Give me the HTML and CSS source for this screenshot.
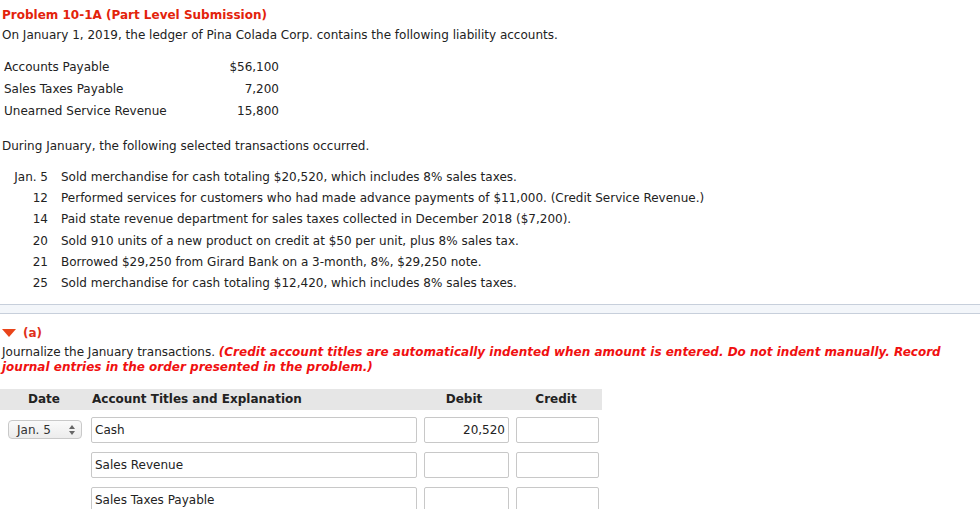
FILE: index.html
```html
<!DOCTYPE html>
<html>
<head>
<meta charset="utf-8">
<link rel="stylesheet" href="styles.css">
</head>
<body>
<div class="problem">
  <h1 class="title">Problem 10-1A (Part Level Submission)</h1>
  <p class="intro">On January 1, 2019, the ledger of Pina Colada Corp. contains the following liability accounts.</p>
  <div class="balances">
    <div class="bal-row"><span class="bal-name">Accounts Payable</span><span class="bal-amt">$56,100</span></div>
    <div class="bal-row"><span class="bal-name">Sales Taxes Payable</span><span class="bal-amt">7,200</span></div>
    <div class="bal-row"><span class="bal-name">Unearned Service Revenue</span><span class="bal-amt">15,800</span></div>
  </div>
  <p class="during">During January, the following selected transactions occurred.</p>
  <div class="trans">
    <span class="t-date">Jan. 5</span><span class="t-text">Sold merchandise for cash totaling $20,520, which includes 8% sales taxes.</span>
    <span class="t-date">12</span><span class="t-text">Performed services for customers who had made advance payments of $11,000. (Credit Service Revenue.)</span>
    <span class="t-date">14</span><span class="t-text">Paid state revenue department for sales taxes collected in December 2018 ($7,200).</span>
    <span class="t-date">20</span><span class="t-text">Sold 910 units of a new product on credit at $50 per unit, plus 8% sales tax.</span>
    <span class="t-date">21</span><span class="t-text">Borrowed $29,250 from Girard Bank on a 3-month, 8%, $29,250 note.</span>
    <span class="t-date">25</span><span class="t-text">Sold merchandise for cash totaling $12,420, which includes 8% sales taxes.</span>
  </div>
</div>
<div class="separator"></div>
<div class="part">
  <div class="part-head">
    <svg class="arrow" width="14" height="9" viewBox="0 0 14 9"><polygon points="0,0 14,0 7,8" fill="#e9441a"/></svg>
    <span class="part-label">(a)</span>
  </div>
  <p class="instr">Journalize the January transactions. <em class="note">(Credit account titles are automatically indented when amount is entered. Do not indent manually. Record journal entries in the order presented in the problem.)</em></p>
  <div class="journal">
    <div class="j-head">
      <span class="h-date">Date</span>
      <span class="h-acct">Account Titles and Explanation</span>
      <span class="h-debit">Debit</span>
      <span class="h-credit">Credit</span>
    </div>
    <div class="j-row first">
      <div class="c-date"><div class="select"><span>Jan. 5</span><svg width="6" height="10" viewBox="0 0 6 10"><polygon points="3,0 6,4 0,4" fill="#666"/><polygon points="0,6 6,6 3,10" fill="#666"/></svg></div></div>
      <div class="field acct">Cash</div>
      <div class="field amt">20,520</div>
      <div class="field amt"></div>
    </div>
    <div class="j-row">
      <div class="c-date"></div>
      <div class="field acct">Sales Revenue</div>
      <div class="field amt"></div>
      <div class="field amt"></div>
    </div>
    <div class="j-row">
      <div class="c-date"></div>
      <div class="field acct">Sales Taxes Payable</div>
      <div class="field amt"></div>
      <div class="field amt"></div>
    </div>
  </div>
</div>
</body>
</html>
```
FILE: styles.css
```css
* { box-sizing: border-box; }
body {
  margin: 0;
  font-family: "DejaVu Sans", Verdana, sans-serif;
  font-size: 12px;
  color: #222;
  background: #fff;
  overflow: hidden;
}
p { margin: 0; }
.problem { padding: 0 2px; }
.title {
  margin: 7px 0 0;
  font-size: 12px;
  font-weight: bold;
  color: #e3230b;
  line-height: 16px;
}
.intro { margin-top: 4px; line-height: 16px; }
.balances { margin-top: 13px; padding-left: 2px; }
.bal-row { display: flex; height: 22px; align-items: center; }
.bal-name { width: 213px; }
.bal-amt { width: 62px; text-align: right; }
.during { margin-top: 16px; line-height: 16px; }
.trans {
  display: grid;
  grid-template-columns: 46px auto;
  column-gap: 13px;
  row-gap: 5.2px;
  margin-top: 15px;
  line-height: 16px;
}
.t-date { text-align: right; }
.separator {
  margin-top: 13px;
  height: 10px;
  border-top: 1px solid #c7cfdb;
  border-bottom: 1px solid #c7cfdb;
  background: #f3f6fa;
}
.part { padding: 0 2px; }
.part-head { display: flex; align-items: center; gap: 7px; margin-top: 11px; height: 16px; }
.arrow { margin-top: 2px; }
.part-label { color: #e0301a; font-weight: bold; }
.instr { margin-top: 4px; line-height: 15px; width: 950px; }
.note { color: #f01010; font-weight: bold; }
.journal { width: 602px; margin-top: 14px; margin-left: -2px; }
.j-head {
  display: grid;
  grid-template-columns: 88px 330px 92px 92px;
  height: 21px;
  align-items: center;
  background: #e6e6e6;
  font-weight: bold;
}
.h-date { text-align: center; }
.h-acct { padding-left: 4px; }
.h-debit, .h-credit { text-align: center; }
.j-row {
  display: grid;
  grid-template-columns: 91px 326px 92px 90px;
  height: 26px;
  margin-top: 9px;
  align-items: center;
}
.j-row.first { margin-top: 7px; }
.j-row .field:nth-child(3),
.j-row .field:nth-child(4) { margin-left: 7px; }
.field {
  height: 26px;
  border: 1px solid #c8c8c8;
  border-radius: 2px;
  padding: 0 3px;
  line-height: 24px;
  background: #fff;
}
.amt { text-align: right; }
.c-date { padding-left: 8px; }
.select {
  width: 74px;
  height: 19px;
  border: 1px solid #c9c9c9;
  border-radius: 4px;
  background: linear-gradient(#fafafa, #ececec);
  display: flex;
  align-items: center;
  justify-content: space-between;
  padding: 0 6px 0 8px;
  color: #333;
}
```
